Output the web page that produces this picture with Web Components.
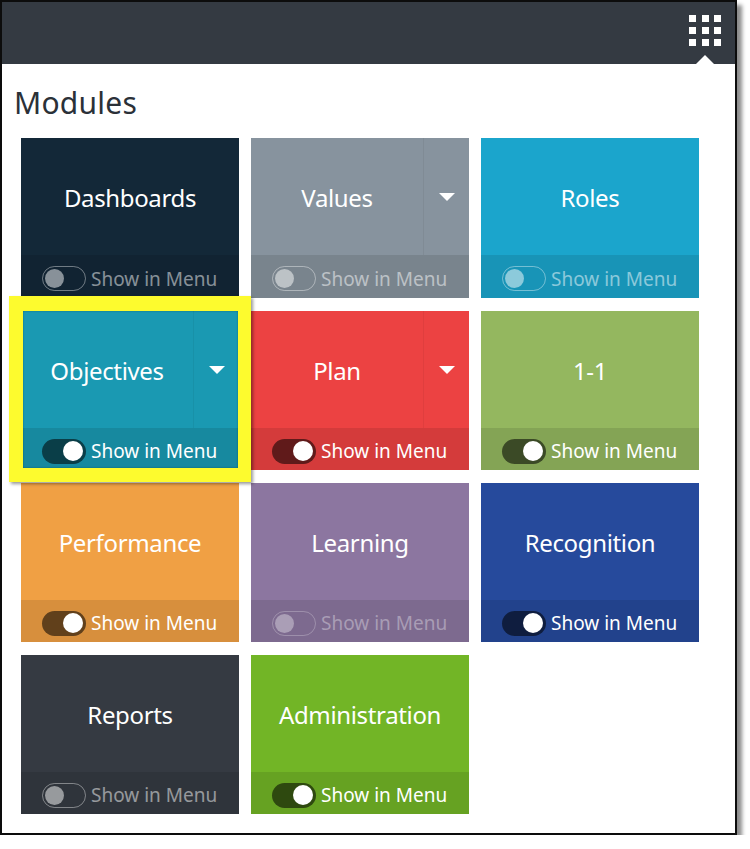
<!DOCTYPE html>
<html>
<head>
<meta charset="utf-8">
<title>Modules</title>
<style>
html, body { margin: 0; background: #fff; }
body { font-family: "Noto Sans", "Open Sans", sans-serif; }
</style>
</head>
<body>
<modules-window>
  <module-tile color="#132838">Dashboards</module-tile>
  <module-tile color="#87939e" split>Values</module-tile>
  <module-tile color="#1ba5cc">Roles</module-tile>
  <module-tile color="#1a99b2" split on highlight>Objectives</module-tile>
  <module-tile color="#ec4242" split on>Plan</module-tile>
  <module-tile color="#94b75f" on>1-1</module-tile>
  <module-tile color="#f0a044" on>Performance</module-tile>
  <module-tile color="#8c76a0" faded>Learning</module-tile>
  <module-tile color="#264a9c" on>Recognition</module-tile>
  <module-tile color="#353a42">Reports</module-tile>
  <module-tile color="#72b526" on>Administration</module-tile>
</modules-window>

<script>
const windowTemplate = document.createElement("template");
windowTemplate.innerHTML = `\
<style>
:host {
  display: block;
  box-sizing: border-box;
  width: 737px;
  height: 835px;
  border: 2px solid #0c0c0c;
  background: #fff;
  box-shadow: 5px 5px 4px rgba(0, 0, 0, .45);
}
header {
  position: relative;
  height: 62px;
  background: #343a42;
  display: flex;
  justify-content: flex-end;
  padding: 13px 14px 0 0;
  box-sizing: border-box;
}
.apps {
  display: grid;
  grid-template-columns: repeat(3, 7px);
  grid-template-rows: repeat(3, 7px);
  gap: 5px 5.5px;
  height: 32px;
}
.apps i { background: #fff; }
/* notch that points at the open menu */
.notch {
  position: absolute;
  right: 21px;
  bottom: 0;
  width: 0;
  height: 0;
  border-left: 9px solid transparent;
  border-right: 9px solid transparent;
  border-bottom: 9px solid #fff;
}
h1 {
  margin: 0;
  padding-left: 12px;
  height: 74px;
  box-sizing: border-box;
  padding-top: 18px;
  font: 400 30px/41px "Noto Sans", "Open Sans", sans-serif;
  letter-spacing: .25px;
  color: #2b3138;
}
.grid {
  display: grid;
  grid-template-columns: repeat(3, 218px);
  grid-template-rows: 160px 159px 159px 159px;
  gap: 13px 12px;
  padding-left: 19px;
}
</style>
<header>
  <div class="apps"><i></i><i></i><i></i><i></i><i></i><i></i><i></i><i></i><i></i></div>
  <div class="notch"></div>
</header>
<h1>Modules</h1>
<div class="grid"><slot></slot></div>
`;

class ModulesWindow extends HTMLElement {
  constructor() {
    super();
    this.attachShadow({ mode: "open" });
    this.shadowRoot.appendChild(windowTemplate.content.cloneNode(true));
  }
}

const tileTemplate = document.createElement("template");
tileTemplate.innerHTML = `\
<style>
:host {
  display: flex;
  flex-direction: column;
  position: relative;
  color: #fff;
  font-family: "Noto Sans", "Open Sans", sans-serif;
}
.top {
  height: 117px;
  flex: none;
  display: flex;
}
.name {
  flex: 1;
  display: flex;
  align-items: center;
  justify-content: center;
  font-size: 24px;
  letter-spacing: -.35px;
  padding-top: 1px;
}
.more {
  display: none;
  width: 45px;
  border-left: 1px solid rgba(0, 0, 0, .05);
  align-items: center;
  justify-content: center;
}
.more svg { display: block; }
:host([split]) .more { display: flex; }
.foot {
  flex: 1;
  background: rgba(0, 0, 0, .1);
  display: flex;
  align-items: center;
  padding: 4px 0 0 21px;
  gap: 5px;
  font-size: 19px;
  color: rgba(255, 255, 255, .5);
}
.switch {
  box-sizing: border-box;
  width: 44px;
  height: 25px;
  border-radius: 13px;
  border: 1px solid rgba(255, 255, 255, .4);
  display: flex;
  align-items: center;
  padding: 0 2px;
}
.knob {
  width: 19px;
  height: 19px;
  border-radius: 50%;
  background: rgba(255, 255, 255, .5);
}
:host([on]) .foot { color: #fff; }
:host([on]) .switch {
  border: 0;
  padding: 0 3px;
  background: rgba(0, 0, 0, .55);
  justify-content: flex-end;
}
:host([on]) .knob { width: 20px; height: 20px; background: #fff; }
:host([faded]) .foot { color: rgba(255, 255, 255, .35); }
:host([faded]) .switch { border-color: rgba(255, 255, 255, .25); }
:host([faded]) .knob { background: rgba(255, 255, 255, .35); }
/* yellow callout drawn over the tile */
.mark { display: none; }
:host([highlight]) .mark {
  display: block;
  position: absolute;
  top: -15px;
  left: -12px;
  right: -12px;
  bottom: -12px;
  border: solid #fdfb2e;
  border-width: 15px 13px 14px 14px;
  box-shadow: 2px 2px 3px rgba(0, 0, 0, .4), inset 0 0 2px rgba(0, 0, 0, .35);
  z-index: 1;
}
</style>
<div class="top">
  <div class="name"><slot></slot></div>
  <div class="more">
    <svg width="16" height="8" viewBox="0 0 16 8"><path d="M0 0h16L8 8z" fill="#fff"/></svg>
  </div>
</div>
<div class="foot">
  <span class="switch"><span class="knob"></span></span>
  <span>Show in Menu</span>
</div>
<div class="mark"></div>
`;

class ModuleTile extends HTMLElement {
  constructor() {
    super();
    this.attachShadow({ mode: "open" });
    this.shadowRoot.appendChild(tileTemplate.content.cloneNode(true));
  }

  connectedCallback() {
    this.style.background = this.getAttribute("color");
  }
}

customElements.define("modules-window", ModulesWindow);
customElements.define("module-tile", ModuleTile);
</script>
</body>
</html>
